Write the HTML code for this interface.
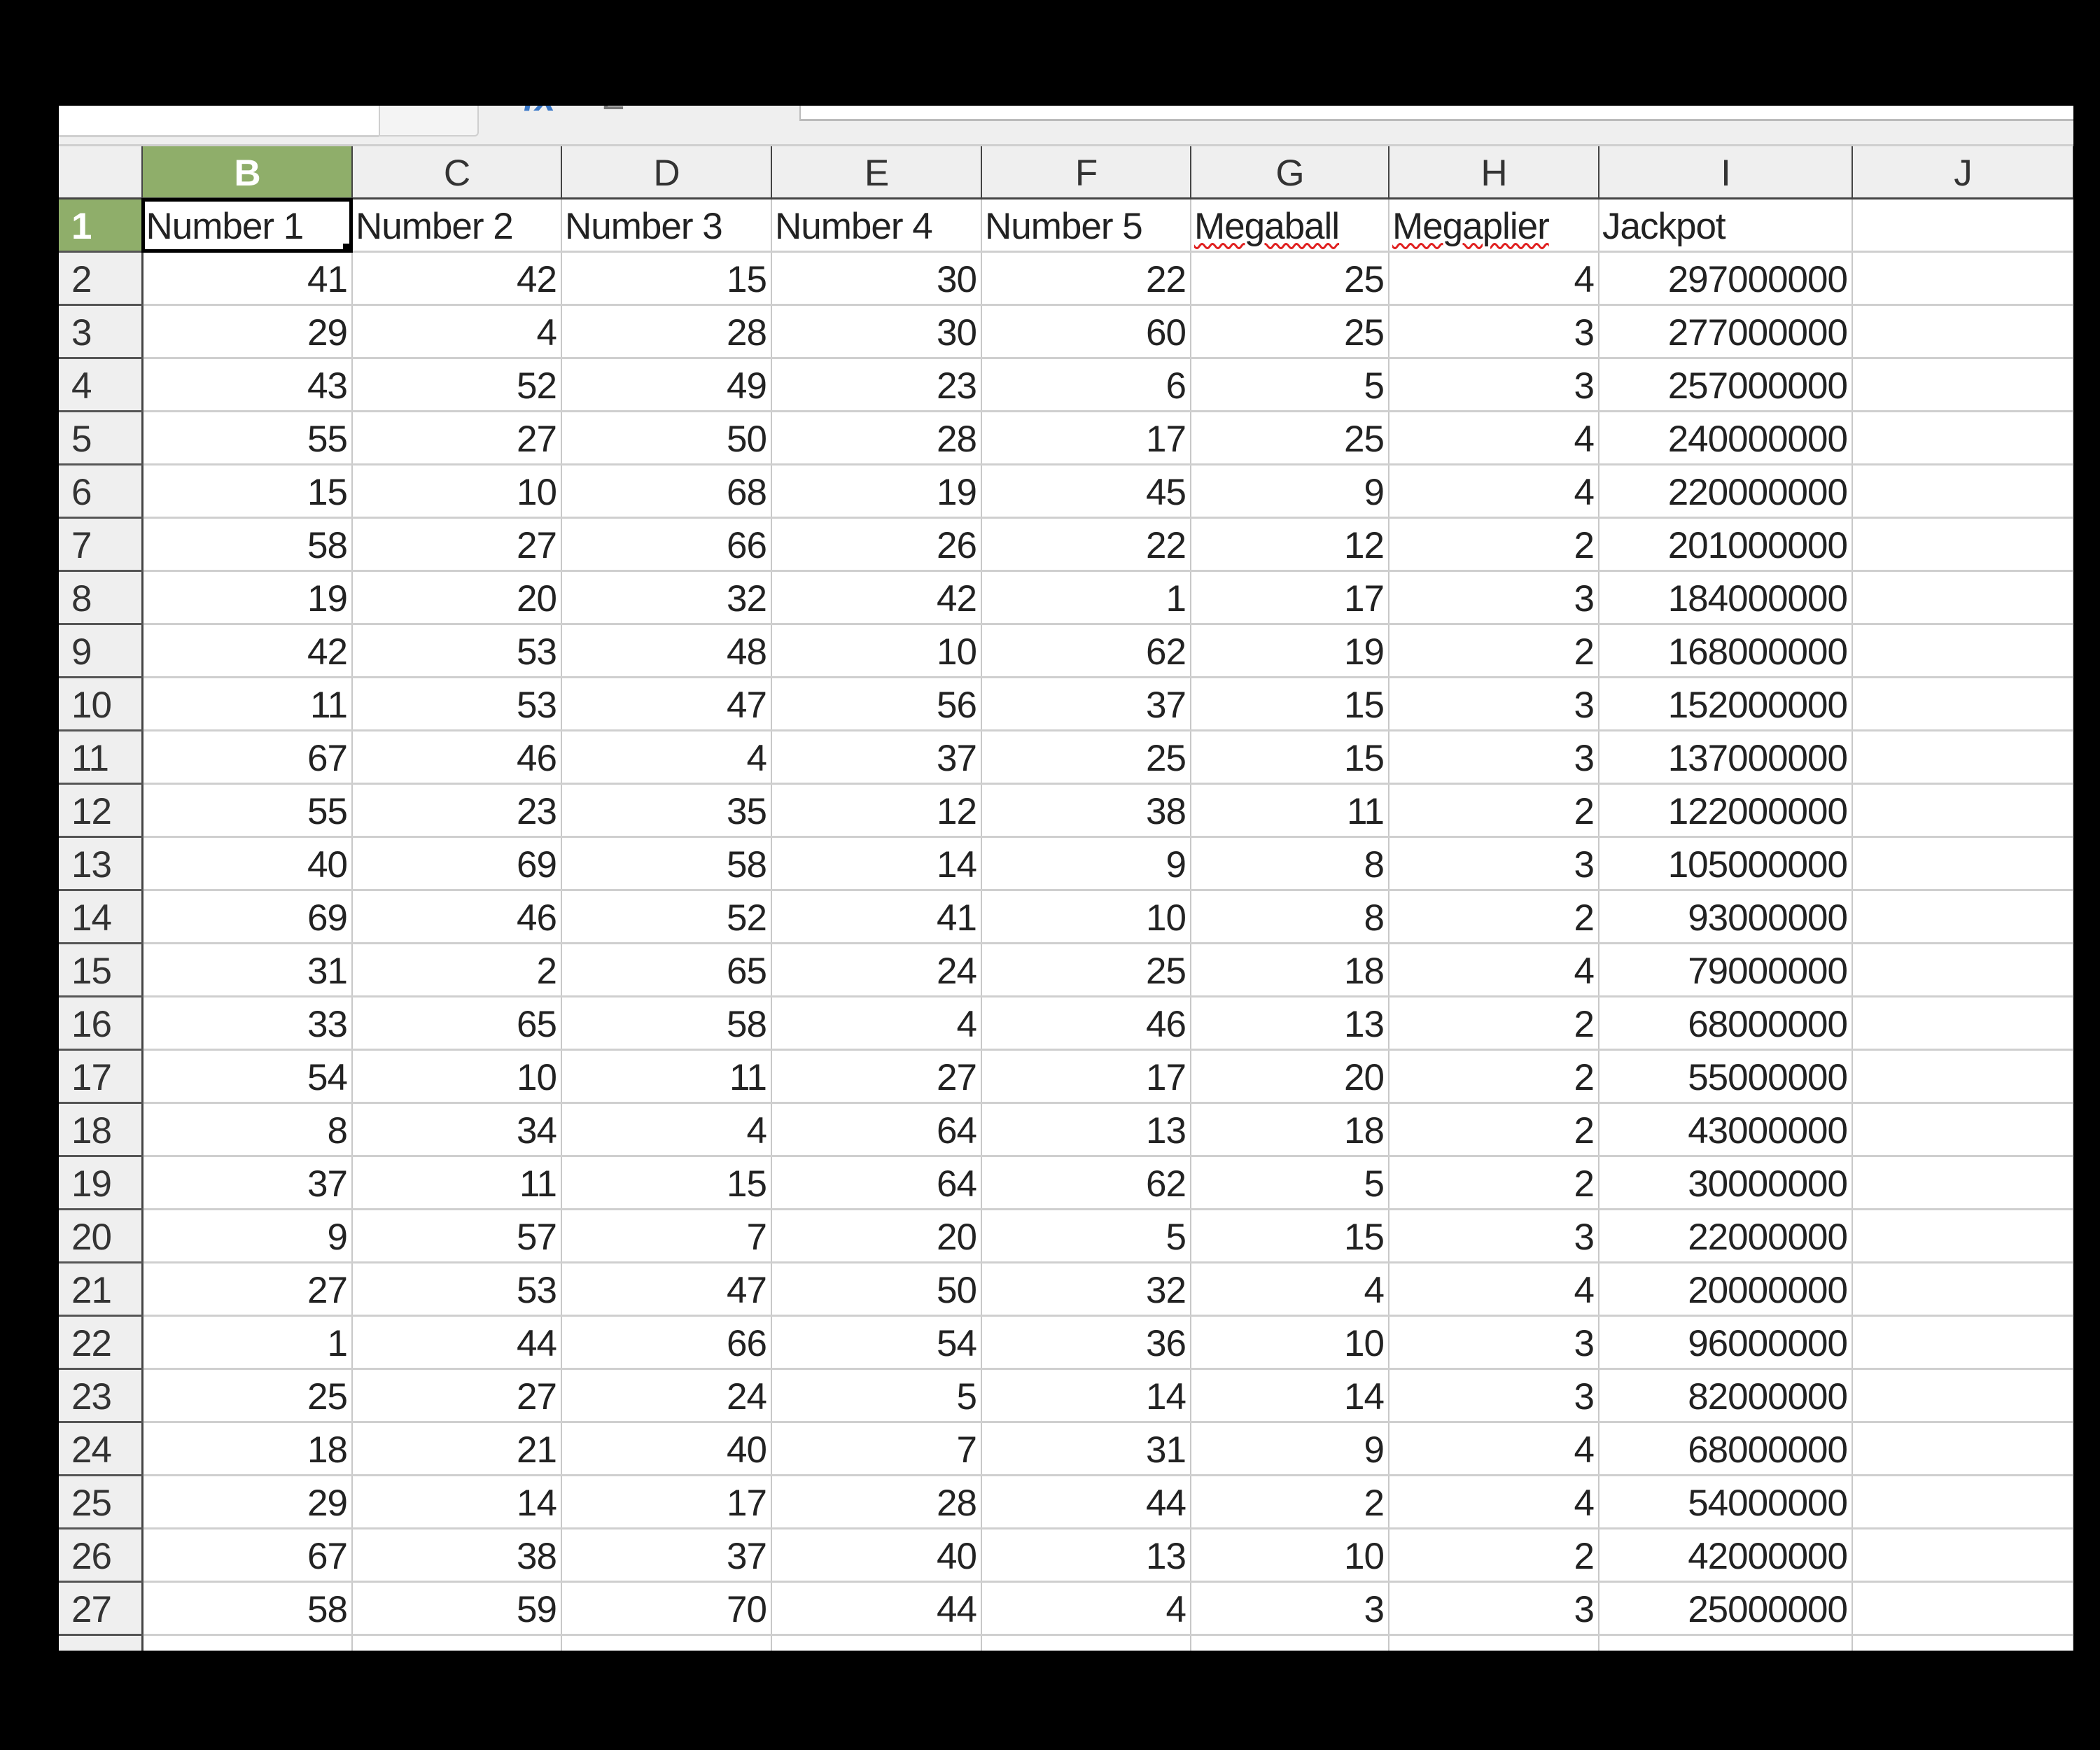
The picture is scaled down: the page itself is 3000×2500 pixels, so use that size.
<!DOCTYPE html>
<html><head><meta charset="utf-8"><style>
body{margin:0;width:3000px;height:2500px;background:#000;position:relative;overflow:hidden;font-family:"Liberation Sans",sans-serif}
#app{position:absolute;left:84px;top:151px;width:2878px;height:2207px;background:#efefef;overflow:hidden}
.abs{position:absolute}
table{position:absolute;left:0;top:58px;border-collapse:collapse;table-layout:fixed;width:2878px}
td{height:69px;padding:4px 6px 0 6px;font-size:53px;letter-spacing:-1px;color:#222;border-right:2px solid #c8c8c8;border-bottom:3px solid #cfcfcf;background:#fff;text-align:right;white-space:nowrap;overflow:hidden;line-height:69px;box-sizing:content-box}
tr.h td{background:#efefef;text-align:center;border-right:2px solid #444;border-bottom:3px solid #444;color:#333}
td.r{background:#efefef;text-align:left;padding-left:18px;color:#333;border-right:3px solid #444;border-bottom:3px solid #555}
td.l{text-align:left;padding-left:4px}
td.g{background:#8fae6a!important;color:#fff!important;font-weight:bold}
.sp{text-decoration:underline wavy #e02020;text-decoration-thickness:3px;text-underline-offset:6px}
</style></head><body>
<div id="app">
<div class="abs" style="left:0;top:0;width:457px;height:42px;background:#fff;border-bottom:3px solid #cfcfcf"></div>
<div class="abs" style="left:457px;top:0;width:139px;height:42px;background:#f4f4f4;border:2px solid #cfcfcf;border-top:none;border-radius:0 0 6px 0"></div>
<div class="abs" style="left:663px;top:-40px;font-size:52px;font-style:italic;font-weight:bold;color:#3a78c8">fx</div>
<div class="abs" style="left:776px;top:-42px;font-size:52px;color:#777">Σ</div>
<div class="abs" style="left:1058px;top:0;width:1820px;height:19px;background:#fff;border-left:2px solid #bbb;border-bottom:3px solid #bbb"></div>
<div class="abs" style="left:0;top:55px;width:2878px;height:3px;background:#cfcfcf"></div>
<table>
<colgroup><col style="width:119px"><col style="width:300px"><col style="width:299px"><col style="width:300px"><col style="width:300px"><col style="width:299px"><col style="width:283px"><col style="width:300px"><col style="width:362px"><col style="width:316px"></colgroup>
<tr class="h"><td></td><td class="g">B</td><td>C</td><td>D</td><td>E</td><td>F</td><td>G</td><td>H</td><td>I</td><td>J</td></tr>
<tr><td class="r g">1</td><td class="l" style="position:relative;outline:5px solid #000;outline-offset:-4px">Number 1<span style="position:absolute;right:-2px;bottom:-4px;width:14px;height:14px;background:#000"></span></td><td class="l">Number 2</td><td class="l">Number 3</td><td class="l">Number 4</td><td class="l">Number 5</td><td class="l"><span class="sp">Megaball</span></td><td class="l"><span class="sp">Megaplier</span></td><td class="l">Jackpot</td><td></td></tr>
<tr><td class="r">2</td><td>41</td><td>42</td><td>15</td><td>30</td><td>22</td><td>25</td><td>4</td><td>297000000</td><td></td></tr>
<tr><td class="r">3</td><td>29</td><td>4</td><td>28</td><td>30</td><td>60</td><td>25</td><td>3</td><td>277000000</td><td></td></tr>
<tr><td class="r">4</td><td>43</td><td>52</td><td>49</td><td>23</td><td>6</td><td>5</td><td>3</td><td>257000000</td><td></td></tr>
<tr><td class="r">5</td><td>55</td><td>27</td><td>50</td><td>28</td><td>17</td><td>25</td><td>4</td><td>240000000</td><td></td></tr>
<tr><td class="r">6</td><td>15</td><td>10</td><td>68</td><td>19</td><td>45</td><td>9</td><td>4</td><td>220000000</td><td></td></tr>
<tr><td class="r">7</td><td>58</td><td>27</td><td>66</td><td>26</td><td>22</td><td>12</td><td>2</td><td>201000000</td><td></td></tr>
<tr><td class="r">8</td><td>19</td><td>20</td><td>32</td><td>42</td><td>1</td><td>17</td><td>3</td><td>184000000</td><td></td></tr>
<tr><td class="r">9</td><td>42</td><td>53</td><td>48</td><td>10</td><td>62</td><td>19</td><td>2</td><td>168000000</td><td></td></tr>
<tr><td class="r">10</td><td>11</td><td>53</td><td>47</td><td>56</td><td>37</td><td>15</td><td>3</td><td>152000000</td><td></td></tr>
<tr><td class="r">11</td><td>67</td><td>46</td><td>4</td><td>37</td><td>25</td><td>15</td><td>3</td><td>137000000</td><td></td></tr>
<tr><td class="r">12</td><td>55</td><td>23</td><td>35</td><td>12</td><td>38</td><td>11</td><td>2</td><td>122000000</td><td></td></tr>
<tr><td class="r">13</td><td>40</td><td>69</td><td>58</td><td>14</td><td>9</td><td>8</td><td>3</td><td>105000000</td><td></td></tr>
<tr><td class="r">14</td><td>69</td><td>46</td><td>52</td><td>41</td><td>10</td><td>8</td><td>2</td><td>93000000</td><td></td></tr>
<tr><td class="r">15</td><td>31</td><td>2</td><td>65</td><td>24</td><td>25</td><td>18</td><td>4</td><td>79000000</td><td></td></tr>
<tr><td class="r">16</td><td>33</td><td>65</td><td>58</td><td>4</td><td>46</td><td>13</td><td>2</td><td>68000000</td><td></td></tr>
<tr><td class="r">17</td><td>54</td><td>10</td><td>11</td><td>27</td><td>17</td><td>20</td><td>2</td><td>55000000</td><td></td></tr>
<tr><td class="r">18</td><td>8</td><td>34</td><td>4</td><td>64</td><td>13</td><td>18</td><td>2</td><td>43000000</td><td></td></tr>
<tr><td class="r">19</td><td>37</td><td>11</td><td>15</td><td>64</td><td>62</td><td>5</td><td>2</td><td>30000000</td><td></td></tr>
<tr><td class="r">20</td><td>9</td><td>57</td><td>7</td><td>20</td><td>5</td><td>15</td><td>3</td><td>22000000</td><td></td></tr>
<tr><td class="r">21</td><td>27</td><td>53</td><td>47</td><td>50</td><td>32</td><td>4</td><td>4</td><td>20000000</td><td></td></tr>
<tr><td class="r">22</td><td>1</td><td>44</td><td>66</td><td>54</td><td>36</td><td>10</td><td>3</td><td>96000000</td><td></td></tr>
<tr><td class="r">23</td><td>25</td><td>27</td><td>24</td><td>5</td><td>14</td><td>14</td><td>3</td><td>82000000</td><td></td></tr>
<tr><td class="r">24</td><td>18</td><td>21</td><td>40</td><td>7</td><td>31</td><td>9</td><td>4</td><td>68000000</td><td></td></tr>
<tr><td class="r">25</td><td>29</td><td>14</td><td>17</td><td>28</td><td>44</td><td>2</td><td>4</td><td>54000000</td><td></td></tr>
<tr><td class="r">26</td><td>67</td><td>38</td><td>37</td><td>40</td><td>13</td><td>10</td><td>2</td><td>42000000</td><td></td></tr>
<tr><td class="r">27</td><td>58</td><td>59</td><td>70</td><td>44</td><td>4</td><td>3</td><td>3</td><td>25000000</td><td></td></tr>
<tr><td class="r"></td><td></td><td></td><td></td><td></td><td></td><td></td><td></td><td></td><td></td></tr>
</table>
</div>
</body></html>
